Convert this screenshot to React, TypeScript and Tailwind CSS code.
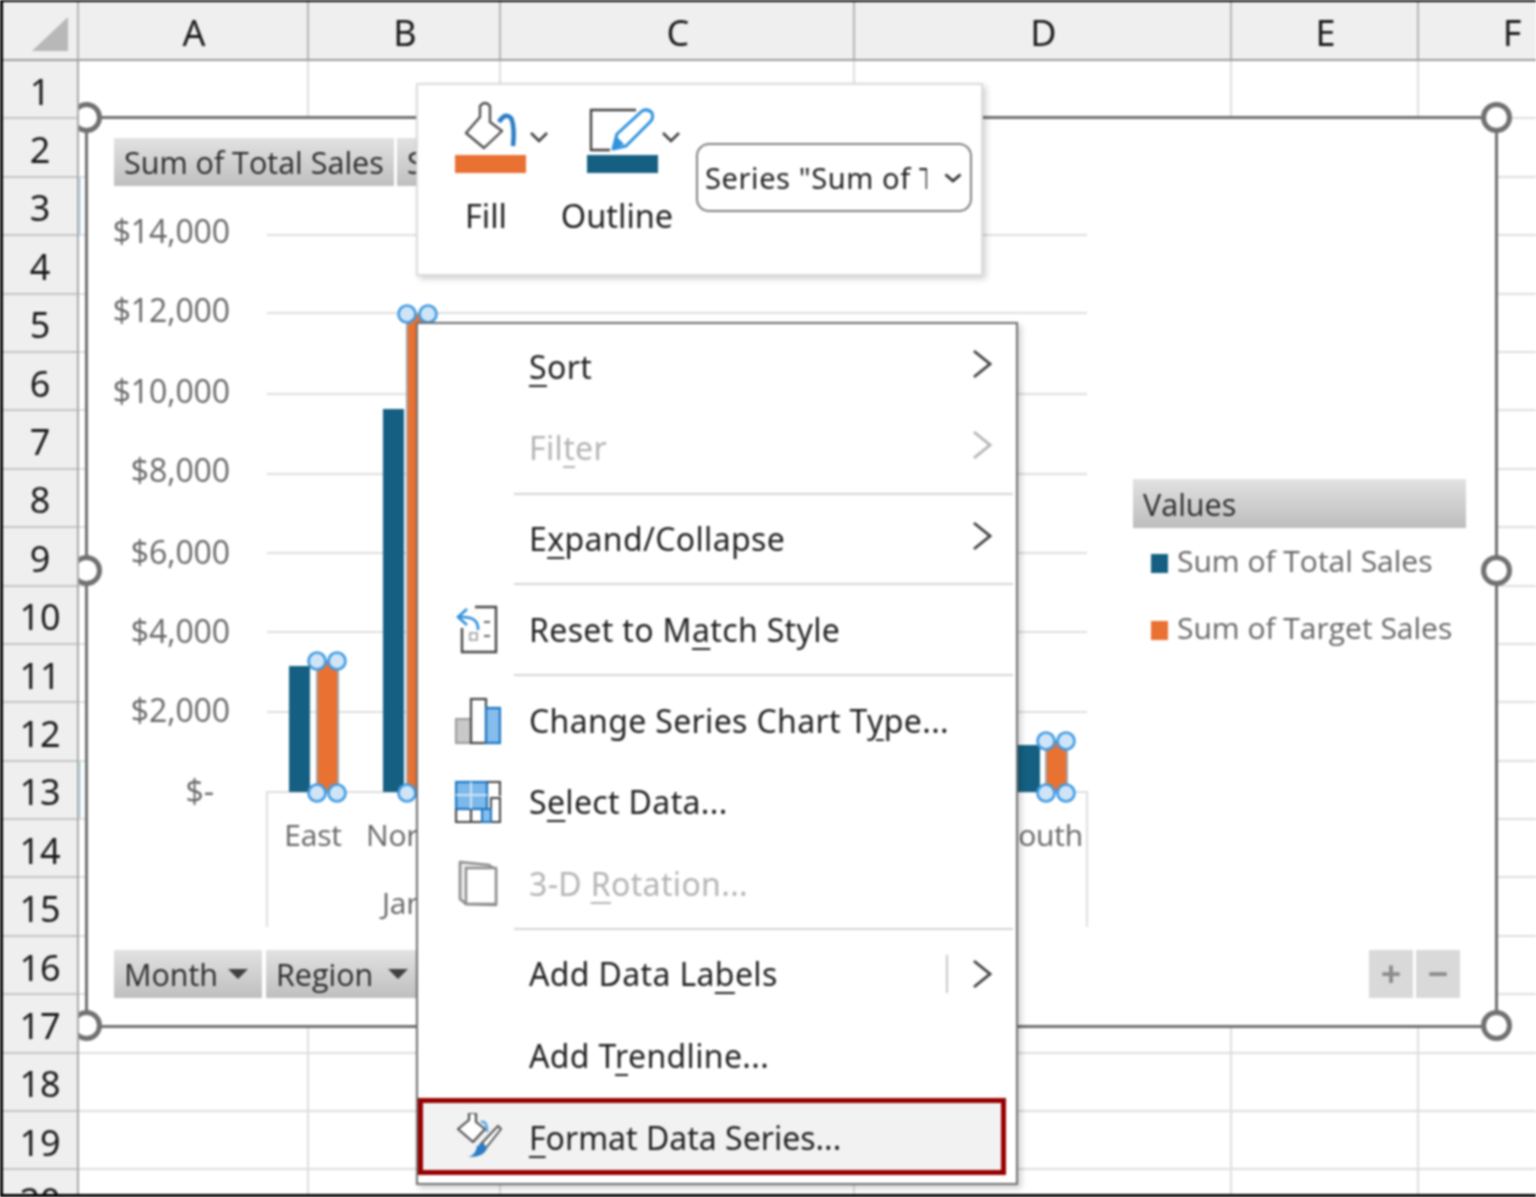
import React from "react";

const columns = [
  { name: "A", w: "w-[230px]" },
  { name: "B", w: "w-[192px]" },
  { name: "C", w: "w-[354px]" },
  { name: "D", w: "w-[377px]" },
  { name: "E", w: "w-[187px]" },
  { name: "F", w: "w-[186px]" },
];
const rows = Array.from({ length: 20 }, (_, i) => i + 1);

const BLUE = "#156082";
const ORANGE = "#e97132";

function Chevron({ color = "#404040" }: { color?: string }) {
  return (
    <svg width="20" height="30" viewBox="0 0 20 30" className="block">
      <path d="M2 2 L18 15 L2 28" fill="none" stroke={color} strokeWidth="2.8" />
    </svg>
  );
}

function SmallChevron() {
  return (
    <svg width="18" height="10" viewBox="0 0 18 10" className="block">
      <path d="M1.5 1.5 L9 8 L16.5 1.5" fill="none" stroke="#303030" strokeWidth="2.8" />
    </svg>
  );
}

function Handle({ cx, cy }: { cx: number; cy: number }) {
  return <circle cx={cx} cy={cy} r="8.5" fill="#cfe4f7" stroke="#3f9be3" strokeWidth="2.6" />;
}

function Bar({ x, y, w, fill, outline }: { x: number; y: number; w: number; fill: string; outline?: boolean }) {
  return (
    <rect
      x={x}
      y={y}
      width={w}
      height={792 - y}
      fill={fill}
      stroke={outline ? "#a3a3a3" : "none"}
      strokeWidth={outline ? 2 : 0}
    />
  );
}

function ChartPlot() {
  const grid = [235, 313, 394, 474, 553, 632, 712];
  const labels = [
    ["$14,000", 243, 230],
    ["$12,000", 322, 230],
    ["$10,000", 403, 230],
    ["$8,000", 482, 230],
    ["$6,000", 564, 230],
    ["$4,000", 643, 230],
    ["$2,000", 722, 230],
    ["$-", 803, 214],
  ] as const;
  return (
    <svg
      width="1019"
      height="764"
      viewBox="114 186 1019 764"
      className="block shrink-0 overflow-visible font-['Open_Sans']"
    >
      {grid.map((y) => (
        <line key={y} x1="267" x2="1087" y1={y} y2={y} stroke="#dedede" strokeWidth="2" />
      ))}
      <path d="M267 927 V792 H1087 V927" fill="none" stroke="#dedede" strokeWidth="2" />
      {labels.map(([t, y, x]) => (
        <text key={t} x={x} y={y} textAnchor="end" fontSize="32" letterSpacing="-0.1" fill="#666666">
          {t}
        </text>
      ))}
      <Bar x={289} y={666} w={21} fill={BLUE} />
      <Bar x={317} y={661} w={21} fill={ORANGE} outline />
      <Bar x={383} y={409} w={21} fill={BLUE} />
      <Bar x={407} y={314} w={21} fill={ORANGE} outline />
      <Bar x={1018} y={745} w={22} fill={BLUE} />
      <Bar x={1046} y={741} w={21} fill={ORANGE} outline />
      {[
        [317, 661],
        [337, 661],
        [317, 793],
        [337, 793],
        [407, 314],
        [428, 314],
        [407, 793],
        [1046, 741],
        [1066, 741],
        [1046, 793],
        [1066, 793],
      ].map(([cx, cy]) => (
        <Handle key={`${cx}-${cy}`} cx={cx} cy={cy} />
      ))}
      <g fontSize="30" fill="#666666" letterSpacing="-0.2">
        <text x="313" y="846" textAnchor="middle">East</text>
        <text x="366" y="846">North</text>
        <text x="1083" y="846" textAnchor="end">South</text>
        <text x="382" y="914">Jan</text>
      </g>
    </svg>
  );
}

function FieldButton({ label, w, arrow }: { label: string; w: string; arrow?: boolean }) {
  return (
    <div
      className={`${w} h-[48px] shrink-0 flex items-center justify-between pl-[10px] pr-[14px] bg-linear-to-b from-[#e2e2e2] to-[#bfbfbf] text-[#2b2b2b] text-[30.5px] whitespace-nowrap overflow-hidden`}
    >
      <span className="pt-[2px]">{label}</span>
      {arrow && (
        <svg width="20" height="10" viewBox="0 0 20 10" className="block shrink-0">
          <path d="M0 0 H20 L10 10 Z" fill="#404040" />
        </svg>
      )}
    </div>
  );
}

function ChartFrame() {
  return (
    <div className="absolute left-[6px] top-[55px] w-[1413px] h-[912px] border-[3px] border-[#707070] bg-white pl-[26px] pt-[19px] font-['Open_Sans']">
      <div className="flex gap-[3px]">
        <FieldButton label="Sum of Total Sales" w="w-[280px]" />
        <FieldButton label="Sum of Target Sales" w="w-[290px]" />
      </div>
      <div className="flex h-[764px]">
        <ChartPlot />
        <div className="w-[333px] pt-[293px] shrink-0">
          <div className="h-[49px] flex items-center pl-[10px] bg-linear-to-b from-[#e2e2e2] to-[#bdbdbd] text-[#2b2b2b] text-[30.5px]">
            <span className="pt-[2px]">Values</span>
          </div>
          <div className="flex flex-col gap-[26px] pt-[12px] pl-[18px] text-[#666666] text-[30px]">
            <div className="h-[41px] flex items-center gap-[9px]">
              <span className="w-[17px] h-[19px] mt-[6px] bg-[#156082]" />
              <span>Sum of Total Sales</span>
            </div>
            <div className="h-[41px] flex items-center gap-[9px]">
              <span className="w-[17px] h-[19px] mt-[6px] bg-[#e97132]" />
              <span>Sum of Target Sales</span>
            </div>
          </div>
        </div>
      </div>
      <div className="flex w-[1346px] gap-[4px]">
        <FieldButton label="Month" w="w-[148px]" arrow />
        <FieldButton label="Region" w="w-[156px]" arrow />
        <div className="ml-auto flex gap-[3px]">
          <div className="w-[44px] h-[48px] bg-[#d9d9d9] flex items-center justify-center text-[#8c8c8c] text-[36px] font-bold">+</div>
          <div className="w-[44px] h-[48px] bg-[#d9d9d9] flex items-center justify-center text-[#8c8c8c] text-[36px] font-bold">−</div>
        </div>
      </div>
      {[
        "-left-[17px] -top-[17px]",
        "-left-[17px] top-[436px]",
        "-left-[17px] top-[891px]",
        "-right-[17px] -top-[17px]",
        "-right-[17px] top-[436px]",
        "-right-[17px] top-[891px]",
      ].map((pos) => (
        <span key={pos} className={`absolute ${pos} w-[31px] h-[31px] rounded-full bg-white border-[5px] border-[#707070]`} />
      ))}
    </div>
  );
}

function Toolbar() {
  return (
    <div className="absolute left-[337px] top-[22px] w-[567px] h-[193px] bg-white border-2 border-[#dcdcdc] shadow-[3px_3px_6px_rgba(0,0,0,0.18)] flex items-start pl-[37px] pt-[13px] font-['Noto_Sans'] text-[#1f1f1f]">
      <div className="flex flex-col w-[96px] shrink-0">
        <svg width="96" height="76" viewBox="455 98 96 76" className="block">
          <path d="M466 133 L480 117 V106 Q485 100 490 106 V122 L502 131 L484 148 Z" fill="#fff" stroke="#505050" strokeWidth="2.4" strokeLinejoin="round" />
          <path d="M499 122 Q505 112 511 118 Q515 126 513 146" fill="none" stroke="#2b7cc4" strokeWidth="4.5" />
          <rect x="455" y="155" width="71" height="18" fill="#e97132" />
          <path d="M531 133 L539 141 L547 133" fill="none" stroke="#404040" strokeWidth="2.6" />
        </svg>
        <div className="w-[62px] flex justify-center pt-[20px] text-[32.5px] leading-[44px] whitespace-nowrap">Fill</div>
      </div>
      <div className="flex flex-col w-[94px] ml-[36px] shrink-0">
        <svg width="94" height="76" viewBox="587 98 94 76" className="block">
          <path d="M636 110 H591 V150 H610" fill="none" stroke="#404040" strokeWidth="2.4" />
          <path d="M613 149 L617 134 L642 111 Q648 108 652 113 Q654 118 650 122 L626 146 Z" fill="#fff" stroke="#2f93dd" strokeWidth="3" strokeLinejoin="round" />
          <path d="M613 149 L617 137 L624 144 Z" fill="#2f93dd" />
          <rect x="587" y="155" width="71" height="18" fill="#156082" />
          <path d="M663 133 L671 141 L679 133" fill="none" stroke="#404040" strokeWidth="2.6" />
        </svg>
        <div className="w-[60px] flex justify-center pt-[20px] text-[32.5px] leading-[44px] whitespace-nowrap">Outline</div>
      </div>
      <div className="ml-[15px] mt-[45px] w-[276px] h-[69px] shrink-0 rounded-[13px] border-2 border-[#808080] flex items-center pl-[7px] pr-[8px] justify-between">
        <span className="w-[222px] overflow-hidden whitespace-nowrap text-[29px] tracking-[0.6px]">Series "Sum of Total</span>
        <SmallChevron />
      </div>
    </div>
  );
}

const S = "#444444";
const L = "#2b8fdc";

const icons: Record<string, React.ReactNode> = {
  reset: (
    <svg width="46" height="50" viewBox="455 603 46 50" className="block">
      <path d="M475 605 H496 V650 H462 V626" fill="none" stroke={S} strokeWidth="2.4" />
      <path d="M478 628 Q479 614 460 615" fill="none" stroke={L} strokeWidth="2.6" />
      <path d="M467 607 L458 615 L467 623" fill="none" stroke={L} strokeWidth="2.6" />
      <path d="M484 620 H490 M484 634 H490" stroke="#666" strokeWidth="2" />
      <path d="M470 631 H477 V638 H470 Z" fill="none" stroke="#999" strokeWidth="1.6" />
    </svg>
  ),
  change: (
    <svg width="46" height="50" viewBox="456 693 46 50" className="block">
      <rect x="457" y="716" width="15" height="24" fill="#c8c8c8" stroke="#9a9a9a" strokeWidth="2" />
      <rect x="472" y="696" width="15" height="44" fill="#fff" stroke="#444" strokeWidth="2.2" />
      <rect x="487" y="705" width="14" height="35" fill="#85bcec" stroke="#1b75c0" strokeWidth="2.2" />
    </svg>
  ),
  select: (
    <svg width="46" height="46" viewBox="456 778 46 46" className="block">
      <rect x="457" y="781" width="31" height="27" fill="#7db8ea" stroke="#1b75c0" strokeWidth="2.2" />
      <path d="M472 781 V808 M457 794 H488" stroke="#cfe4f7" strokeWidth="2" />
      <path d="M457 808 V821 H482 M472 808 V821 M488 781 H501 V795" fill="none" stroke="#444" strokeWidth="2.2" />
      <rect x="492" y="797" width="9" height="24" fill="#fff" stroke="#444" strokeWidth="2" />
      <rect x="483" y="808" width="9" height="13" fill="#85bcec" stroke="#1b75c0" strokeWidth="2" />
    </svg>
  ),
  rotate: (
    <svg width="46" height="50" viewBox="455 857 46 50" className="block">
      <path d="M460 860 L489 863 L496 868 V903 L466 902 L460 897 Z" fill="#efefef" stroke="#8c8c8c" strokeWidth="2.6" strokeLinejoin="round" />
      <path d="M466 866 H496 V902 H466 Z" fill="#fff" stroke="#8c8c8c" strokeWidth="2.4" />
    </svg>
  ),
  format: (
    <svg width="46" height="46" viewBox="456 1115 46 46" className="block">
      <path d="M458 1131 L469 1122 V1116 Q472 1113 476 1116 V1124 L485 1131 L473 1144 Z" fill="#fff" stroke="#505050" strokeWidth="2.2" strokeLinejoin="round" />
      <path d="M481 1124 Q487 1122 487 1134" fill="none" stroke="#58a6e6" strokeWidth="2.6" />
      <path d="M480 1147 L498 1128 L501 1131 L486 1150" fill="#fff" stroke="#555" strokeWidth="2" />
      <path d="M468 1159 Q476 1157 477 1148 L484 1145 L487 1151 Q482 1160 468 1159 Z" fill="#2b7cc4" />
    </svg>
  ),
};

type Item = {
  pre: string;
  u: string;
  post: string;
  icon?: string;
  sub?: boolean;
  off?: boolean;
  split?: boolean;
  sel?: boolean;
};
type Entry = Item | "sep";

const menu: Entry[] = [
  { pre: "", u: "S", post: "ort", sub: true },
  { pre: "Fil", u: "t", post: "er", sub: true, off: true },
  "sep",
  { pre: "E", u: "x", post: "pand/Collapse", sub: true },
  "sep",
  { pre: "Reset to M", u: "a", post: "tch Style", icon: "reset" },
  "sep",
  { pre: "Change Series Chart T", u: "y", post: "pe...", icon: "change" },
  { pre: "S", u: "e", post: "lect Data...", icon: "select" },
  { pre: "3-D ", u: "R", post: "otation...", icon: "rotate", off: true },
  "sep",
  { pre: "Add Data La", u: "b", post: "els", sub: true, split: true },
  { pre: "Add T", u: "r", post: "endline..." },
  { pre: "", u: "F", post: "ormat Data Series...", icon: "format", sel: true },
];

function MenuRow({ item }: { item: Item }) {
  const tone = item.off ? "text-[#b4b4b4]" : "text-[#1f1f1f]";
  const box = item.sel ? "border-[5px] border-[#960000] bg-[#f2f2f2] mr-[10px] h-[77px] mt-[1px]" : "h-[81.5px]";
  const text = item.sel ? "pt-[3px]" : "tracking-[0.35px]";
  return (
    <div className={`flex items-center ${box} ${tone}`}>
      <div className={`shrink-0 flex justify-start ${item.sel ? "w-[106px] pl-[33px]" : "w-[111px] pl-[37px]"}`}>
        {item.icon && icons[item.icon]}
      </div>
      <div className={`flex-1 whitespace-nowrap text-[32px] ${text}`}>
        {item.pre}
        <span className="underline underline-offset-[6px] decoration-2">{item.u}</span>
        {item.post}
      </div>
      {item.sub && (
        <div className={`flex items-center pr-[24px] ${item.split ? "" : "-mt-[6px]"}`}>
          {item.split && <span className="block w-[2px] h-[38px] bg-[#c8c8c8] mr-[24px]" />}
          <Chevron color={item.off ? "#b4b4b4" : "#404040"} />
        </div>
      )}
    </div>
  );
}

function ContextMenu() {
  return (
    <div className="absolute left-[337px] top-[261px] w-[602px] h-[863px] bg-white border-2 border-[#707070] shadow-[3px_3px_6px_rgba(0,0,0,0.2)] pt-[2px] font-['Noto_Sans']">
      {menu.map((entry, i) =>
        entry === "sep" ? (
          <div key={i} className="h-[9.3px] pl-[96px] pr-[3px] flex items-center">
            <div className="h-[2px] w-full bg-[#d4d4d4]" />
          </div>
        ) : (
          <MenuRow key={i} item={entry} />
        )
      )}
    </div>
  );
}

export default function App() {
  return (
    <div className="w-[1536px] h-[1197px] overflow-hidden bg-black pl-[3px] pt-[2px] pb-[3px] font-['Noto_Sans'] blur-[0.8px]">
      <div className="h-full bg-white flex flex-col overflow-hidden">
        <div className="h-[59px] shrink-0 flex bg-[#efefef] border-b-2 border-[#9c9c9c] text-[#1a1a1a] text-[36px]">
          <div className="w-[76px] shrink-0 border-r-2 border-[#b4b4b4] flex items-end pb-[8px] pl-[29px]">
            <svg width="36" height="34" viewBox="0 0 36 34" className="block">
              <path d="M36 0 V34 H0 Z" fill="#b8b8b8" />
            </svg>
          </div>
          {columns.map((c) => (
            <div key={c.name} className={`${c.w} shrink-0 border-r-2 border-[#b4b4b4] flex items-center justify-center pt-[5px] pl-[2px]`}>
              {c.name}
            </div>
          ))}
        </div>
        <div className="flex flex-1 min-h-0">
          <div className="w-[76px] shrink-0 bg-[#efefef] border-r-2 border-[#a8a8a8] text-[#1a1a1a] text-[36px]">
            {rows.map((r) => (
              <div key={r} className="h-[58.4px] border-b-2 border-[#c4c4c4] flex items-center justify-center pt-[5px]">
                {r}
              </div>
            ))}
          </div>
          <div className="relative flex-1 overflow-hidden">
            {rows.map((r) => (
              <div
                key={r}
                className={`h-[58.4px] flex border-b-2 border-b-[#dedede] ${r === 3 || r === 13 ? "border-l-2 border-l-[#bfe3f7]" : ""}`}
              >
                {columns.map((c) => (
                  <div key={c.name} className={`${c.w} shrink-0 border-r-2 border-[#dedede]`} />
                ))}
              </div>
            ))}
            <ChartFrame />
            <Toolbar />
            <ContextMenu />
          </div>
        </div>
      </div>
    </div>
  );
}
